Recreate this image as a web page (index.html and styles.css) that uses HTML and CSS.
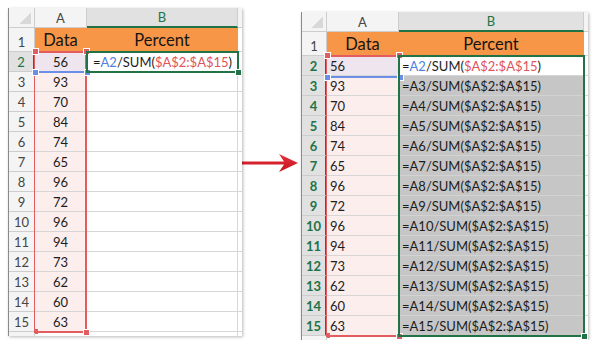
FILE: index.html
```html
<!DOCTYPE html>
<html>
<head>
<meta charset="utf-8">
<link rel="stylesheet" href="styles.css">
</head>
<body>
<div class="page">
  <div class="sheet sheet-l">
    <div class="c h corner"></div><div class="c h">A</div><div class="c h hs colsel">B</div><div class="c h x"></div>
    <div class="c h rh">1</div><div class="c o">Data</div><div class="c o">Percent</div><div class="c x"></div>
    <div class="c h rh hs rowsel">2</div><div class="c a a2">56</div><div class="c b f">=<span class="blu">A2</span>/SUM(<span class="red">$A$2:$A$15</span>)</div><div class="c x"></div>
    <div class="c h rh">3</div><div class="c a">93</div><div class="c b"></div><div class="c x"></div>
    <div class="c h rh">4</div><div class="c a">70</div><div class="c b"></div><div class="c x"></div>
    <div class="c h rh">5</div><div class="c a">84</div><div class="c b"></div><div class="c x"></div>
    <div class="c h rh">6</div><div class="c a">74</div><div class="c b"></div><div class="c x"></div>
    <div class="c h rh">7</div><div class="c a">65</div><div class="c b"></div><div class="c x"></div>
    <div class="c h rh">8</div><div class="c a">96</div><div class="c b"></div><div class="c x"></div>
    <div class="c h rh">9</div><div class="c a">72</div><div class="c b"></div><div class="c x"></div>
    <div class="c h rh">10</div><div class="c a">96</div><div class="c b"></div><div class="c x"></div>
    <div class="c h rh">11</div><div class="c a">94</div><div class="c b"></div><div class="c x"></div>
    <div class="c h rh">12</div><div class="c a">73</div><div class="c b"></div><div class="c x"></div>
    <div class="c h rh">13</div><div class="c a">62</div><div class="c b"></div><div class="c x"></div>
    <div class="c h rh">14</div><div class="c a">60</div><div class="c b"></div><div class="c x"></div>
    <div class="c h rh">15</div><div class="c a">63</div><div class="c b"></div><div class="c x"></div>
    <div class="c h rh end"></div><div class="c end"></div><div class="c end"></div><div class="c x end"></div>

    <div class="ref-red l-red"><i class="sq tl"></i><i class="sq tr"></i><i class="sq br"></i><i class="mk bl"></i></div>
    <div class="ref-blue l-blue"><i class="sq bl"></i><i class="sq br"></i></div>
    <div class="selbox l-sel"><i class="handle"></i></div>
  </div>

  <svg class="arrow" width="59" height="24" viewBox="0 0 59 24">
    <defs>
      <linearGradient id="ag" x1="0" y1="0" x2="0" y2="1">
        <stop offset="0" stop-color="#e8323a"/>
        <stop offset="1" stop-color="#c3121f"/>
      </linearGradient>
    </defs>
    <path d="M0 8.5 L42 8.5 L37 1 L56 10 L37 19 L42 11.5 L0 11.5 Z" fill="url(#ag)"/>
  </svg>

  <div class="sheet sheet-r">
    <div class="c h corner"></div><div class="c h">A</div><div class="c h hs colsel">B</div><div class="c h x"></div>
    <div class="c h rh">1</div><div class="c o">Data</div><div class="c o">Percent</div><div class="c x"></div>
    <div class="c h rh hs rowsel">2</div><div class="c a a2">56</div><div class="c b f">=<span class="blu">A2</span>/SUM(<span class="red">$A$2:$A$15</span>)</div><div class="c x"></div>
    <div class="c h rh hs rowsel">3</div><div class="c a">93</div><div class="c b gs">=A3/SUM($A$2:$A$15)</div><div class="c x"></div>
    <div class="c h rh hs rowsel">4</div><div class="c a">70</div><div class="c b gs">=A4/SUM($A$2:$A$15)</div><div class="c x"></div>
    <div class="c h rh hs rowsel">5</div><div class="c a">84</div><div class="c b gs">=A5/SUM($A$2:$A$15)</div><div class="c x"></div>
    <div class="c h rh hs rowsel">6</div><div class="c a">74</div><div class="c b gs">=A6/SUM($A$2:$A$15)</div><div class="c x"></div>
    <div class="c h rh hs rowsel">7</div><div class="c a">65</div><div class="c b gs">=A7/SUM($A$2:$A$15)</div><div class="c x"></div>
    <div class="c h rh hs rowsel">8</div><div class="c a">96</div><div class="c b gs">=A8/SUM($A$2:$A$15)</div><div class="c x"></div>
    <div class="c h rh hs rowsel">9</div><div class="c a">72</div><div class="c b gs">=A9/SUM($A$2:$A$15)</div><div class="c x"></div>
    <div class="c h rh hs rowsel">10</div><div class="c a">96</div><div class="c b gs">=A10/SUM($A$2:$A$15)</div><div class="c x"></div>
    <div class="c h rh hs rowsel">11</div><div class="c a">94</div><div class="c b gs">=A11/SUM($A$2:$A$15)</div><div class="c x"></div>
    <div class="c h rh hs rowsel">12</div><div class="c a">73</div><div class="c b gs">=A12/SUM($A$2:$A$15)</div><div class="c x"></div>
    <div class="c h rh hs rowsel">13</div><div class="c a">62</div><div class="c b gs">=A13/SUM($A$2:$A$15)</div><div class="c x"></div>
    <div class="c h rh hs rowsel">14</div><div class="c a">60</div><div class="c b gs">=A14/SUM($A$2:$A$15)</div><div class="c x"></div>
    <div class="c h rh hs rowsel">15</div><div class="c a">63</div><div class="c b gs">=A15/SUM($A$2:$A$15)</div><div class="c x"></div>
    <div class="c h rh end"></div><div class="c end"></div><div class="c end"></div><div class="c x end"></div>

    <div class="ref-red r-red"><i class="sq tl"></i><i class="sq tr"></i><i class="sq br"></i><i class="mk bl"></i></div>
    <div class="ref-blue r-blue"><i class="sq bl"></i><i class="sq br"></i></div>
    <div class="selbox r-sel"><i class="handle"></i></div>
  </div>
</div>
</body>
</html>
```

FILE: styles.css
```css
* { box-sizing: border-box; }
html, body { margin: 0; padding: 0; background: #fff; }
.page {
  display: flex;
  align-items: flex-start;
  padding-left: 8px;
  font-family: Lato, "Liberation Sans", sans-serif;
}
.sheet {
  display: grid;
  position: relative;
  background: #fff;
  border-left: 1px solid #8a8a8a;
  box-shadow: 1px 1px 3px rgba(0, 0, 0, 0.28);
  grid-template-rows: 20px 24px repeat(14, 20px) 4px;
}
.sheet-l {
  margin-top: 8px;
  grid-template-columns: 26px 52px 151px 4px;
}
.sheet-r {
  margin-top: 12px;
  grid-template-columns: 25px 72px 185px 4px;
}
.arrow {
  display: block;
  flex: none;
  margin-top: 153px;
}
.c {
  border-right: 1px solid #d6d6d6;
  border-bottom: 1px solid #d6d6d6;
  display: flex;
  align-items: flex-end;
  padding-bottom: 1px;
  line-height: 16px;
  font-size: 13px;
  color: #1c1c1c;
  white-space: nowrap;
  overflow: hidden;
}
.h {
  background: #f4f4f4;
  color: #454545;
  justify-content: center;
  border-color: #cdcdcd;
}
.h.hs { background: #e1e1e1; color: #217346; }
.colsel { border-bottom: 2px solid #217346; }
.rowsel { border-right: 2px solid #217346; }
.sheet-r .rowsel { font-weight: 700; }
.corner {
  background-color: #f4f4f4;
  background-image: linear-gradient(135deg, transparent 50%, #d8d8d8 50%);
  background-size: 11px 11px;
  background-position: right 3px bottom 3px;
  background-repeat: no-repeat;
}
.x { border-right: 0; }
.end { border-bottom: 0; }
.o {
  background: #f79646;
  border-right-color: #f79646;
  border-bottom-color: #f79646;
  justify-content: center;
  font-size: 16.5px;
  line-height: 20px;
  color: #151515;
}
.a { background: #fdeeee; }
.sheet-l .a { justify-content: center; }
.sheet-r .a { padding-left: 3px; }
.a2 { background: #eee5ee; }
.sheet-l .b { padding-left: 6px; }
.sheet-r .b { padding-left: 3px; }
.gs { background: #c6c6c6; border-bottom-color: #d2d2d2; border-right-color: #c6c6c6; }
.blu { color: #4f7fe0; }
.red { color: #e0545a; }

/* reference & selection overlays */
.ref-red, .ref-blue, .selbox { position: absolute; pointer-events: none; }
.ref-red {
  border: 2px solid #e35d60;
  border-left-width: 1px;
}
.ref-blue { border-bottom: 2px solid #6b8fe6; }
.sq {
  position: absolute;
  width: 5px;
  height: 5px;
  background: #e35d60;
  border: 1px solid #fff;
  box-sizing: content-box;
}
.ref-blue .sq { background: #6b8fe6; }
.mk {
  position: absolute;
  width: 3px;
  height: 5px;
  background: #e35d60;
}
.ref-red .tl { left: -3px; top: -5px; }
.ref-red .tr { right: -5px; top: -5px; }
.ref-red .br { right: -5px; bottom: -5px; }
.ref-red .bl { left: 0; bottom: -3px; }
.ref-blue .bl { left: -3px; bottom: -5px; }
.ref-blue .br { right: -4px; bottom: -5px; }

.selbox { border: 2px solid #217346; }
.handle {
  position: absolute;
  right: -5px;
  bottom: -5px;
  width: 5px;
  height: 5px;
  background: #217346;
  border: 1px solid #fff;
  box-sizing: content-box;
}

/* left sheet: padding box origin at page (9, 8) */
.l-red { left: 25px; top: 43px; width: 53px; height: 282px; }
.l-blue { left: 26px; top: 44px; width: 52px; height: 21px; }
.l-sel { left: 77px; top: 43px; width: 153px; height: 22px; }

/* right sheet: padding box origin at page (302, 12) */
.r-red { left: 24px; top: 43px; width: 74px; height: 282px; }
.r-blue { left: 25px; top: 44px; width: 73px; height: 22px; }
.r-sel { left: 96px; top: 43px; width: 187px; height: 282px; }
```
